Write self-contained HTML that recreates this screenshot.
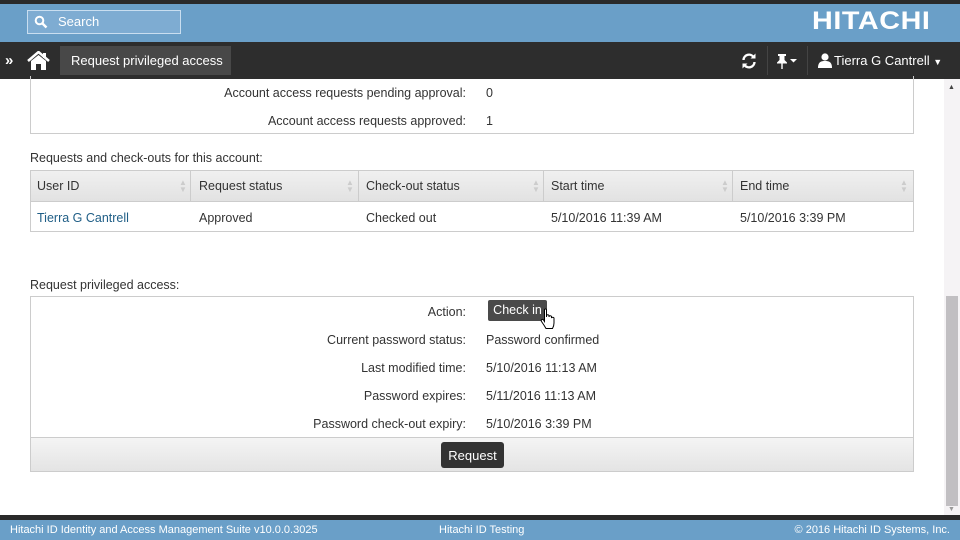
<!DOCTYPE html>
<html><head><style>
*{margin:0;padding:0;box-sizing:border-box}
body{width:960px;height:540px;overflow:hidden;position:relative;background:#fff;font-family:"Liberation Sans",sans-serif;font-size:12.5px;color:#333}
.a{position:absolute}
.lbl{position:absolute;text-align:right;width:300px;left:166px}
.val{position:absolute;left:486px}
</style></head><body>
<div class="a" style="left:0;top:0;width:960px;height:4px;background:#2a2a2a"></div>
<div class="a" style="left:0;top:4px;width:960px;height:38px;background:#6a9fc8"></div>
<div class="a" style="left:27px;top:10px;width:154px;height:24px;border:1px solid #c9def0;background:#7eacd2;color:#fff;font-size:13px;line-height:22px;padding-left:30px">Search</div>
<svg class="a" style="left:34px;top:15px" width="14" height="14" viewBox="0 0 14 14"><circle cx="5.5" cy="5.5" r="3.8" fill="none" stroke="#fff" stroke-width="2"/><path d="M8.5 8.5L12.5 12.5" stroke="#fff" stroke-width="2.4"/></svg>
<div class="a" style="left:812px;top:7px;color:#fff;font-size:25px;font-weight:bold;letter-spacing:0.5px;transform:scaleX(1.15);transform-origin:left top">HITACHI</div>
<div class="a" style="left:0;top:42px;width:960px;height:37px;background:#2d2d2d"></div>
<div class="a" style="left:5px;top:52px;color:#fff;font-size:15px;font-weight:bold">»</div>
<svg class="a" style="left:27px;top:51px" width="23" height="19" viewBox="0 0 23 19"><path d="M1 10L11.5 1L22 10" fill="none" stroke="#fff" stroke-width="2.5"/><path d="M4 10L11.5 4L19 10V19H14V13H9V19H4Z" fill="#fff"/><rect x="16" y="2" width="3" height="5" fill="#fff"/></svg>
<div class="a" style="left:60px;top:46px;width:171px;height:29px;background:#484848;color:#fff;font-size:13px;line-height:29px;padding-left:11px">Request privileged access</div>
<svg class="a" style="left:741px;top:53px" width="16" height="16" viewBox="0 0 16 16"><path d="M2.5 7A5.5 5.5 0 0 1 12.5 4" fill="none" stroke="#fff" stroke-width="2.4"/><path d="M9.5 5.5H14.5V0.5Z" fill="#fff"/><path d="M13.5 9A5.5 5.5 0 0 1 3.5 12" fill="none" stroke="#fff" stroke-width="2.4"/><path d="M6.5 10.5H1.5V15.5Z" fill="#fff"/></svg>
<div class="a" style="left:767px;top:46px;width:1px;height:29px;background:#444"></div>
<svg class="a" style="left:775px;top:53px" width="24" height="16" viewBox="0 0 24 16"><path d="M3 1H11V3H9.5V7L12 9.5V10.5H2V9.5L4.5 7V3H3Z" fill="#fff"/><rect x="6.3" y="10" width="1.4" height="6" fill="#fff"/><path d="M15 6H22L18.5 9.5Z" fill="#fff"/></svg>
<div class="a" style="left:807px;top:46px;width:1px;height:29px;background:#444"></div>
<svg class="a" style="left:818px;top:53px" width="14" height="15" viewBox="0 0 14 15"><circle cx="7" cy="4" r="3.6" fill="#fff"/><path d="M0 15C0 9 3 8 7 8S14 9 14 15Z" fill="#fff"/></svg>
<div class="a" style="left:834px;top:53px;color:#fff;font-size:13px">Tierra G Cantrell <span style="font-size:9px">▼</span></div>

<div class="a" style="left:30px;top:76px;width:884px;height:58px;border:1px solid #ccc;border-top:none"></div>
<div class="lbl" style="top:86px">Account access requests pending approval:</div><div class="val" style="top:86px">0</div>
<div class="lbl" style="top:114px">Account access requests approved:</div><div class="val" style="top:114px">1</div>

<div class="a" style="left:30px;top:151px">Requests and check-outs for this account:</div>
<div class="a" style="left:30px;top:170px;width:884px;height:62px;border:1px solid #ccc"></div>
<div class="a" style="left:31px;top:171px;width:882px;height:31px;background:linear-gradient(#f0f0f0,#e2e2e2);border-bottom:1px solid #ccc"></div>
<div class="a" style="left:190px;top:171px;width:1px;height:31px;background:#ccc"></div>
<div class="a" style="left:358px;top:171px;width:1px;height:31px;background:#ccc"></div>
<div class="a" style="left:543px;top:171px;width:1px;height:31px;background:#ccc"></div>
<div class="a" style="left:732px;top:171px;width:1px;height:31px;background:#ccc"></div>
<div class="a" style="left:37px;top:179px">User ID</div>
<div class="a" style="left:199px;top:179px">Request status</div>
<div class="a" style="left:366px;top:179px">Check-out status</div>
<div class="a" style="left:551px;top:179px">Start time</div>
<div class="a" style="left:740px;top:179px">End time</div>
<div class="a" style="left:179px;top:179px;color:#ccc;font-size:8px;line-height:7px">▲<br>▼</div>
<div class="a" style="left:346px;top:179px;color:#ccc;font-size:8px;line-height:7px">▲<br>▼</div>
<div class="a" style="left:532px;top:179px;color:#ccc;font-size:8px;line-height:7px">▲<br>▼</div>
<div class="a" style="left:721px;top:179px;color:#ccc;font-size:8px;line-height:7px">▲<br>▼</div>
<div class="a" style="left:900px;top:179px;color:#ccc;font-size:8px;line-height:7px">▲<br>▼</div>
<div class="a" style="left:37px;top:211px;color:#1f5e86">Tierra G Cantrell</div>
<div class="a" style="left:199px;top:211px">Approved</div>
<div class="a" style="left:366px;top:211px">Checked out</div>
<div class="a" style="left:551px;top:211px">5/10/2016 11:39 AM</div>
<div class="a" style="left:740px;top:211px">5/10/2016 3:39 PM</div>

<div class="a" style="left:30px;top:278px">Request privileged access:</div>
<div class="a" style="left:30px;top:296px;width:884px;height:176px;border:1px solid #ccc"></div>
<div class="lbl" style="top:305px">Action:</div>
<div class="a" style="left:488px;top:300px;width:59px;height:21px;background:#4a4a4a;border-radius:2px;color:#fff;font-size:12.5px;line-height:21px;text-align:center">Check in</div>
<svg class="a" style="left:540px;top:308px" width="17" height="22" viewBox="0 0 17 22"><path d="M4.5 1.5C5.5 0.5 6.5 1 6.5 2V9V7.5C7 6.5 8.5 6.5 9 7.5V9V8.5C9.5 7.5 11 7.5 11.5 8.5V10C12 9 13.5 9 14 10V15C14 18 12.5 20.5 12.5 20.5H6C6 20.5 4 17 1.5 13.5C0.5 12 2.5 10.5 3.5 12L4.5 13.5Z" fill="#fff" stroke="#000" stroke-width="1"/></svg>
<div class="lbl" style="top:333px">Current password status:</div><div class="val" style="top:333px">Password confirmed</div>
<div class="lbl" style="top:361px">Last modified time:</div><div class="val" style="top:361px">5/10/2016 11:13 AM</div>
<div class="lbl" style="top:389px">Password expires:</div><div class="val" style="top:389px">5/11/2016 11:13 AM</div>
<div class="lbl" style="top:417px">Password check-out expiry:</div><div class="val" style="top:417px">5/10/2016 3:39 PM</div>
<div class="a" style="left:31px;top:437px;width:882px;height:34px;background:linear-gradient(#f4f4f4,#e4e4e4);border-top:1px solid #ccc"></div>
<div class="a" style="left:441px;top:442px;width:63px;height:26px;background:#333;border-radius:3px;color:#fff;line-height:27px;text-align:center;font-size:13px">Request</div>

<div class="a" style="left:944px;top:79px;width:16px;height:436px;background:#f5f3f5"></div>
<div class="a" style="left:946px;top:296px;width:12px;height:210px;background:#c1bfc2"></div>
<div class="a" style="left:948px;top:84px;font-size:7px;color:#444">▲</div>
<div class="a" style="left:948px;top:506px;font-size:7px;color:#999">▼</div>

<div class="a" style="left:0;top:515px;width:960px;height:5px;background:#2a2a2a"></div>
<div class="a" style="left:0;top:520px;width:960px;height:20px;background:#6a9fc8"></div>
<div class="a" style="left:10px;top:524px;color:#fff;font-size:11px">Hitachi ID Identity and Access Management Suite v10.0.0.3025</div>
<div class="a" style="left:439px;top:524px;color:#fff;font-size:11px">Hitachi ID Testing</div>
<div class="a" style="right:10px;top:524px;color:#fff;font-size:11px">© 2016 Hitachi ID Systems, Inc.</div>
</body></html>
